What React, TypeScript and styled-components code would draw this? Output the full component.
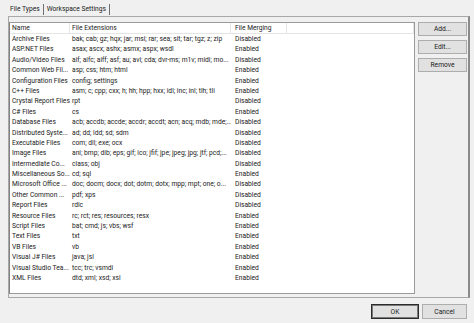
import React from "react";
import styled, { createGlobalStyle } from "styled-components";

const FONT = `"Roboto", "Open Sans", sans-serif`;

const Global = createGlobalStyle`
  html, body { margin: 0; padding: 0; background: #f0f0f0; }
  body { width: 474px; height: 323px; overflow: hidden; font-family: ${FONT}; color: #222; }
  #root { width: 474px; height: 323px; }
`;

const Dialog = styled.div`
  width: 474px;
  height: 323px;
  display: flex;
  flex-direction: column;
  background: #f0f0f0;
  font-size: 6.7px;
`;

const TabStrip = styled.div`
  height: 16px;
  display: flex;
  align-items: flex-end;
  padding: 0 0 1px 9px;
  box-sizing: border-box;
`;

const Tab = styled.div<{ $active?: boolean }>`
  height: 11px;
  line-height: 11px;
  padding: 0 3px 0 1px;
  margin-right: 2px;
  border-right: 1px solid #707070;
  color: #222;
  white-space: nowrap;
`;

const TabPage = styled.div`
  margin: 0 4px 0 8px;
  height: 282px;
  box-sizing: border-box;
  border: 1px solid #a8a8a8;
  border-right: 2px solid #8a8a8a;
  display: flex;
  padding: 5px 1px 3px 0;
  gap: 3px;
`;

const ListView = styled.div`
  flex: 1;
  background: #fff;
  border: 1px solid #9a9a9a;
  border-left-color: #828282;
  display: flex;
  flex-direction: column;
  overflow: hidden;
`;

const HeaderRow = styled.div`
  display: grid;
  grid-template-columns: 60px 161px 56px 1fr;
  height: 10px;
  border-bottom: 1px solid #e5e5e5;
`;

const HeaderCell = styled.div<{ $pad?: number }>`
  line-height: 10px;
  padding-left: ${(p) => p.$pad ?? 2}px;
  border-right: 1px solid #e5e5e5;
  white-space: nowrap;
  overflow: hidden;
`;

const Row = styled.div`
  display: grid;
  grid-template-columns: 60px 161px 56px 1fr;
  height: 10.4px;
`;

const Cell = styled.div<{ $pad?: number }>`
  line-height: 10.4px;
  padding-left: ${(p) => p.$pad ?? 2}px;
  white-space: nowrap;
  overflow: hidden;
`;

const SideButtons = styled.div`
  width: 49px;
  display: flex;
  flex-direction: column;
  gap: 4px;
`;

const Button = styled.button<{ $default?: boolean; $w?: number; $h?: number }>`
  width: ${(p) => p.$w ?? 49}px;
  height: ${(p) => p.$h ?? 14}px;
  padding: 0;
  margin: 0;
  box-sizing: border-box;
  background: #e1e1e1;
  border: 1px solid ${(p) => (p.$default ? "#2b2b2b" : "#adadad")};
  box-shadow: ${(p) => (p.$default ? "inset 0 0 0 1px #7a7a7a" : "none")};
  font-family: ${FONT};
  font-size: 6.7px;
  color: #222;
  line-height: 12px;
`;

const Footer = styled.div`
  flex: 1;
  display: flex;
  justify-content: flex-end;
  align-items: flex-start;
  gap: 3px;
  padding-right: 7px;
  padding-top: 6px;
`;

const rows: [string, string, string][] = [
  ["Archive Files", "bak; cab; gz; hqx; jar; msi; rar; sea; sit; tar; tgz; z; zip", "Disabled"],
  ["ASP.NET Files", "asax; ascx; ashx; asmx; aspx; wsdl", "Enabled"],
  ["Audio/Video Files", "aif; aifc; aiff; asf; au; avi; cda; dvr-ms; m1v; midi; mo...", "Disabled"],
  ["Common Web Fil...", "asp; css; htm; html", "Enabled"],
  ["Configuration Files", "config; settings", "Enabled"],
  ["C++ Files", "asm; c; cpp; cxx; h; hh; hpp; hxx; idl; inc; inl; tlh; tli", "Enabled"],
  ["Crystal Report Files", "rpt", "Disabled"],
  ["C# Files", "cs", "Enabled"],
  ["Database Files", "acb; accdb; accde; accdr; accdt; acn; acq; mdb; mde;...", "Disabled"],
  ["Distributed Syste...", "ad; dd; ldd; sd; sdm", "Disabled"],
  ["Executable Files", "com; dll; exe; ocx", "Disabled"],
  ["Image Files", "ani; bmp; dib; eps; gif; ico; jfif; jpe; jpeg; jpg; jtf; pcd;...", "Disabled"],
  ["Intermediate Co...", "class; obj", "Disabled"],
  ["Miscellaneous So...", "cd; sql", "Enabled"],
  ["Microsoft Office ...", "doc; docm; docx; dot; dotm; dotx; mpp; mpt; one; o...", "Disabled"],
  ["Other Common ...", "pdf; xps", "Disabled"],
  ["Report Files", "rdlc", "Disabled"],
  ["Resource Files", "rc; rct; res; resources; resx", "Enabled"],
  ["Script Files", "bat; cmd; js; vbs; wsf", "Enabled"],
  ["Text Files", "txt", "Enabled"],
  ["VB Files", "vb", "Enabled"],
  ["Visual J# Files", "java; jsl", "Enabled"],
  ["Visual Studio Tea...", "tcc; trc; vsmdi", "Enabled"],
  ["XML Files", "dtd; xml; xsd; xsl", "Enabled"],
];

export default function App() {
  return (
    <>
      <Global />
      <Dialog>
        <TabStrip>
          <Tab $active>File Types</Tab>
          <Tab>Workspace Settings</Tab>
        </TabStrip>
        <TabPage>
          <ListView>
            <HeaderRow>
              <HeaderCell>Name</HeaderCell>
              <HeaderCell>File Extensions</HeaderCell>
              <HeaderCell $pad={4}>File Merging</HeaderCell>
              <HeaderCell />
            </HeaderRow>
            {rows.map(([n, e, m]) => (
              <Row key={n}>
                <Cell>{n}</Cell>
                <Cell>{e}</Cell>
                <Cell $pad={4}>{m}</Cell>
                <Cell />
              </Row>
            ))}
          </ListView>
          <SideButtons>
            <Button>Add...</Button>
            <Button>Edit...</Button>
            <Button>Remove</Button>
          </SideButtons>
        </TabPage>
        <Footer>
          <Button $default $w={48} $h={15}>OK</Button>
          <Button $w={45} $h={15}>Cancel</Button>
        </Footer>
      </Dialog>
    </>
  );
}
